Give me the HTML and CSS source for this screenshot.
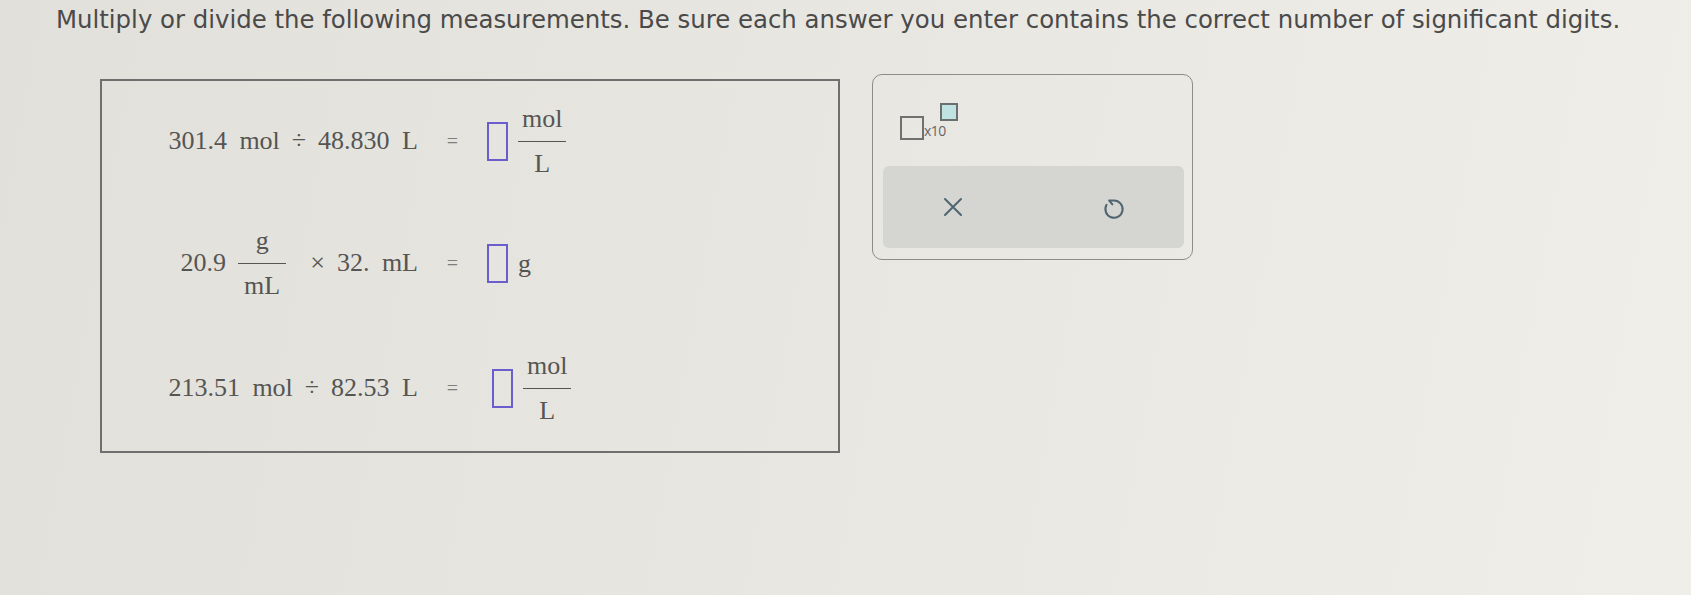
FILE: index.html
```html
<!DOCTYPE html>
<html lang="en">
<head>
<meta charset="utf-8">
<title>Significant digits</title>
<link rel="stylesheet" href="styles.css">
</head>
<body>
<div class="page">
  <h1 class="prompt">Multiply or divide the following measurements. Be sure each answer you enter contains the correct number of significant digits.</h1>
  <div class="workspace">
    <div class="problem">
      <div class="row">
        <div class="lhs"><span>301.4 mol</span><span class="op">÷</span><span>48.830 L</span></div>
        <div class="eq">=</div>
        <div class="rhs"><span class="ans"></span><span class="frac f1"><span class="num">mol</span><span class="den">L</span></span></div>
      </div>
      <div class="row">
        <div class="lhs"><span>20.9</span><span class="frac f2"><span class="num">g</span><span class="den">mL</span></span><span class="op">×</span><span>32. mL</span></div>
        <div class="eq">=</div>
        <div class="rhs"><span class="ans"></span><span class="unit">g</span></div>
      </div>
      <div class="row">
        <div class="lhs"><span>213.51 mol</span><span class="op">÷</span><span>82.53 L</span></div>
        <div class="eq">=</div>
        <div class="rhs shift"><span class="ans"></span><span class="frac f1"><span class="num">mol</span><span class="den">L</span></span></div>
      </div>
    </div>
    <div class="tools">
      <div class="sci">
        <span class="base"></span>
        <span class="x10">x10</span>
        <span class="sup"></span>
      </div>
      <div class="bar">
        <div class="btn btn-clear">
          <svg width="20" height="20" viewBox="0 0 20 20" fill="none" stroke="#4f6670" stroke-width="2" stroke-linecap="round"><path d="M2 2 L18 18 M18 2 L2 18"/></svg>
        </div>
        <div class="btn btn-undo">
          <svg width="26" height="28" viewBox="0 0 24 26" fill="none" stroke="#4f6670" stroke-width="1.9" stroke-linecap="round" stroke-linejoin="round"><path d="M5.07 11 A8 8 0 1 0 12 7 H7.5 L10.5 10.5"/></svg>
        </div>
      </div>
    </div>
  </div>
</div>
</body>
</html>
```
FILE: styles.css
```css
html, body {
  margin: 0;
  padding: 0;
}
body {
  width: 1691px;
  height: 595px;
  overflow: hidden;
  background: linear-gradient(100deg, #e2e0da 0%, #e8e6e1 45%, #efeee9 100%);
}
.page {
  width: 1691px;
  height: 595px;
}
.prompt {
  margin: 0;
  padding: 6px 0 0 56px;
  font-family: "DejaVu Sans", Verdana, sans-serif;
  font-weight: normal;
  font-size: 24.4px;
  line-height: 28px;
  color: #4a4a4a;
  white-space: nowrap;
}
.workspace {
  display: flex;
  align-items: flex-start;
  margin-top: 40px;
}
.problem {
  box-sizing: border-box;
  margin: 5px 0 0 100px;
  width: 740px;
  height: 374px;
  border: 2px solid #6f6f6f;
  display: grid;
  grid-template-columns: 316px 69px auto;
  grid-template-rows: 120px 124px 126px;
  align-items: center;
  font-family: "Liberation Serif", "Times New Roman", serif;
  font-size: 26px;
  color: #555553;
}
.row {
  display: contents;
}
.lhs {
  display: flex;
  justify-content: flex-end;
  align-items: center;
  word-spacing: 6px;
  white-space: nowrap;
}
.op {
  margin: 0 12px;
}
.eq {
  text-align: center;
  font-size: 20px;
  color: #7e7e7c;
}
.rhs {
  display: flex;
  align-items: center;
}
.rhs.shift {
  padding-left: 5px;
}
.ans {
  box-sizing: border-box;
  width: 21px;
  height: 39px;
  border: 2px solid #6a5ecf;
  margin-right: 10px;
}
.frac {
  display: inline-flex;
  flex-direction: column;
  align-items: stretch;
  text-align: center;
  line-height: 26px;
  font-size: 26px;
}
.frac .num {
  padding: 0 4px 9px;
  border-bottom: 1.5px solid #555553;
}
.frac .den {
  padding-top: 9px;
}
.f2 {
  margin: 0 12px;
}
.f2 .num, .f2 .den {
  padding-left: 6px;
  padding-right: 6px;
}
.unit {
  margin-top: 2px;
}
.tools {
  box-sizing: border-box;
  margin-left: 32px;
  width: 321px;
  height: 186px;
  border: 1.5px solid #8c8c8c;
  border-radius: 10px;
  padding: 0 8px 0 10px;
}
.sci {
  display: flex;
  align-items: flex-start;
  margin: 28px 0 0 17px;
  height: 36px;
}
.base {
  box-sizing: border-box;
  width: 24px;
  height: 24px;
  margin-top: 13px;
  border: 2px solid #707070;
}
.x10 {
  margin-top: 20px;
  font-family: "Open Sans", "Liberation Sans", sans-serif;
  font-size: 14px;
  line-height: 16px;
  letter-spacing: -0.5px;
  color: #666;
}
.sup {
  box-sizing: border-box;
  width: 18px;
  height: 18px;
  margin-left: -6px;
  border: 2px solid #6b6f70;
  background: #bfe2e2;
}
.bar {
  margin-top: 27px;
  height: 82px;
  border-radius: 6px;
  background: #d5d5d2;
  display: flex;
}
.btn {
  flex: 1;
  display: flex;
  align-items: center;
  justify-content: center;
}
.btn-clear {
  padding-right: 8px;
}
.btn-undo {
  padding-left: 12px;
}
.btn svg {
  display: block;
}
```
